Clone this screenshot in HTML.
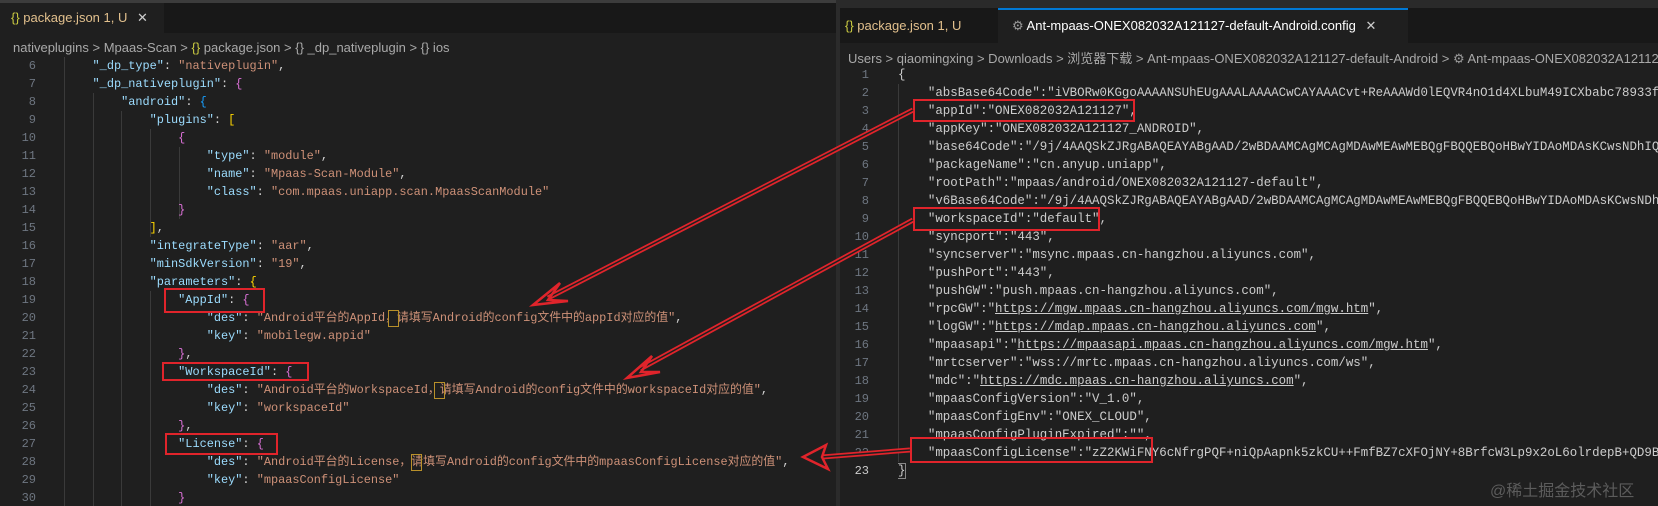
<!DOCTYPE html>
<html><head><meta charset="utf-8"><style>
*{margin:0;padding:0;box-sizing:border-box}
html,body{width:1658px;height:506px;overflow:hidden}
body{background:#1f1f1f;position:relative;font-family:"Liberation Sans","Noto Sans CJK SC",sans-serif}
.abs{position:absolute}
.code{position:absolute;white-space:pre;font-family:"Liberation Mono","Noto Sans CJK SC",monospace;line-height:18px}
.l{font-size:11.9px;color:#d4d4d4}
.r{font-size:12.45px;color:#cccccc}
.k{color:#9cdcfe}.s{color:#ce9178}.m{color:#da70d6}.b{color:#179fff}.y{color:#ffd700}
.ln{position:absolute;font-family:"Liberation Mono",monospace;font-size:12px;color:#6e7681;text-align:right;line-height:18px;white-space:pre}
.u{text-decoration:underline}
.bc{position:absolute;font-size:13px;color:#a9a9a9;white-space:nowrap;overflow:hidden}
.box{position:absolute;border:2px solid #e0242b}
.hl{position:absolute;border:1px solid #b8902a}
.guide{position:absolute;width:1px;background:#3a3a3a}
</style></head><body>
<div class="abs" style="left:0;top:0;width:836px;height:3px;background:#3c3c3c"></div>
<div class="abs" style="left:0;top:3px;width:836px;height:30px;background:#181818"></div>
<div class="abs" style="left:0;top:3px;width:164px;height:30px;background:#1f1f1f"></div>
<div class="abs" style="left:11px;top:10px;font-size:13px;color:#e2c08d;white-space:nowrap"><span style="color:#cbcb41">{}</span> package.json 1, U <span style="color:#ccc;margin-left:6px">✕</span></div>
<div class="bc" style="left:13px;top:40px;width:800px">nativeplugins &gt; Mpaas-Scan &gt; <span style="color:#cbcb41">{}</span> package.json &gt; {} _dp_nativeplugin &gt; {} ios</div>
<div class="guide" style="left:64px;top:57px;height:449px"></div>
<div class="guide" style="left:93px;top:93px;height:413px"></div>
<div class="guide" style="left:121px;top:111px;height:395px"></div>
<div class="guide" style="left:150px;top:129px;height:108px"></div>
<div class="guide" style="left:150px;top:291px;height:215px"></div>
<div class="guide" style="left:179px;top:147px;height:72px"></div>
<div class="ln" style="left:0;top:57px;width:36px">6
7
8
9
10
11
12
13
14
15
16
17
18
19
20
21
22
23
24
25
26
27
28
29
30</div>
<div class="code l" style="left:64px;top:57px;width:772px;height:449px;overflow:hidden">    <span class="k">"_dp_type"</span>: <span class="s">"nativeplugin"</span>,
    <span class="k">"_dp_nativeplugin"</span>: <span class="m">{</span>
        <span class="k">"android"</span>: <span class="b">{</span>
            <span class="k">"plugins"</span>: <span class="y">[</span>
                <span class="m">{</span>
                    <span class="k">"type"</span>: <span class="s">"module"</span>,
                    <span class="k">"name"</span>: <span class="s">"Mpaas-Scan-Module"</span>,
                    <span class="k">"class"</span>: <span class="s">"com.mpaas.uniapp.scan.MpaasScanModule"</span>
                <span class="m">}</span>
            <span class="y">]</span>,
            <span class="k">"integrateType"</span>: <span class="s">"aar"</span>,
            <span class="k">"minSdkVersion"</span>: <span class="s">"19"</span>,
            <span class="k">"parameters"</span>: <span class="y">{</span>
                <span class="k">"AppId"</span>: <span class="m">{</span>
                    <span class="k">"des"</span>: <span class="s">"Android平台的AppId，请填写Android的config文件中的appId对应的值"</span>,
                    <span class="k">"key"</span>: <span class="s">"mobilegw.appid"</span>
                <span class="m">}</span>,
                <span class="k">"WorkspaceId"</span>: <span class="m">{</span>
                    <span class="k">"des"</span>: <span class="s">"Android平台的WorkspaceId，请填写Android的config文件中的workspaceId对应的值"</span>,
                    <span class="k">"key"</span>: <span class="s">"workspaceId"</span>
                <span class="m">}</span>,
                <span class="k">"License"</span>: <span class="m">{</span>
                    <span class="k">"des"</span>: <span class="s">"Android平台的License，请填写Android的config文件中的mpaasConfigLicense对应的值"</span>,
                    <span class="k">"key"</span>: <span class="s">"mpaasConfigLicense"</span>
                <span class="m">}</span></div>
<div class="box" style="left:164px;top:288px;width:101px;height:25px"></div>
<div class="box" style="left:162px;top:362px;width:147px;height:19px"></div>
<div class="box" style="left:165px;top:433px;width:113px;height:22px"></div>
<div class="hl" style="left:388px;top:310px;width:11px;height:17px"></div>
<div class="hl" style="left:434px;top:382px;width:11px;height:17px"></div>
<div class="hl" style="left:411px;top:454px;width:11px;height:17px"></div>
<div class="abs" style="left:836px;top:0;width:4px;height:506px;background:#2b2b2b"></div>
<div class="abs" style="left:840px;top:0;width:818px;height:8px;background:#2a2a2a"></div>
<div class="abs" style="left:840px;top:8px;width:818px;height:35px;background:#181818"></div>
<div class="abs" style="left:998px;top:8px;width:410px;height:35px;background:#1f1f1f;border-top:2px solid #0078d4"></div>
<div class="abs" style="left:845px;top:18px;font-size:13px;color:#e2c08d;white-space:nowrap"><span style="color:#cbcb41">{}</span> package.json 1, U</div>
<div class="abs" style="left:1012px;top:18px;font-size:13px;color:#fff;white-space:nowrap"><span style="color:#9a9a9a">⚙</span> Ant-mpaas-ONEX082032A121127-default-Android.config <span style="color:#ccc;margin-left:6px">✕</span></div>
<div class="bc" style="left:848px;top:48px;width:810px">Users &gt; qiaomingxing &gt; Downloads &gt; 浏览器下载 &gt; Ant-mpaas-ONEX082032A121127-default-Android &gt; <span style="color:#9a9a9a">⚙</span> Ant-mpaas-ONEX082032A121127-default-Android.config</div>
<div class="guide" style="left:898px;top:84px;height:378px"></div>
<div class="ln" style="left:840px;top:66px;width:29px">1
2
3
4
5
6
7
8
9
10
11
12
13
14
15
16
17
18
19
20
21
22
<span style="color:#ccc">23</span></div>
<div class="code r" style="left:898px;top:66px;width:760px;height:440px;overflow:hidden">{
    "absBase64Code":"iVBORw0KGgoAAAANSUhEUgAAALAAAACwCAYAAACvt+ReAAAWd0lEQVR4nO1d4XLbuM49ICXbabc78933f717F",
    "appId":"ONEX082032A121127",
    "appKey":"ONEX082032A121127_ANDROID",
    "base64Code":"/9j/4AAQSkZJRgABAQEAYABgAAD/2wBDAAMCAgMCAgMDAwMEAwMEBQgFBQQEBQoHBwYIDAoMDAsKCwsNDhIQDQ4R",
    "packageName":"cn.anyup.uniapp",
    "rootPath":"mpaas/android/ONEX082032A121127-default",
    "v6Base64Code":"/9j/4AAQSkZJRgABAQEAYABgAAD/2wBDAAMCAgMCAgMDAwMEAwMEBQgFBQQEBQoHBwYIDAoMDAsKCwsNDhIQDQ4R",
    "workspaceId":"default",
    "syncport":"443",
    "syncserver":"msync.mpaas.cn-hangzhou.aliyuncs.com",
    "pushPort":"443",
    "pushGW":"push.mpaas.cn-hangzhou.aliyuncs.com",
    "rpcGW":"<span class="u">https://mgw.mpaas.cn-hangzhou.aliyuncs.com/mgw.htm</span>",
    "logGW":"<span class="u">https://mdap.mpaas.cn-hangzhou.aliyuncs.com</span>",
    "mpaasapi":"<span class="u">https://mpaasapi.mpaas.cn-hangzhou.aliyuncs.com/mgw.htm</span>",
    "mrtcserver":"wss://mrtc.mpaas.cn-hangzhou.aliyuncs.com/ws",
    "mdc":"<span class="u">https://mdc.mpaas.cn-hangzhou.aliyuncs.com</span>",
    "mpaasConfigVersion":"V_1.0",
    "mpaasConfigEnv":"ONEX_CLOUD",
    "mpaasConfigPluginExpired":"",
    "mpaasConfigLicense":"zZ2KWiFNY6cNfrgPQF+niQpAapnk5zkCU++FmfBZ7cXFOjNY+8BrfcW3Lp9x2oL6olrdepB+QD9BNMJ",
<span style="outline:1px solid #888">}</span></div>
<div class="box" style="left:913px;top:99px;width:222px;height:23px"></div>
<div class="box" style="left:913px;top:207px;width:187px;height:24px"></div>
<div class="box" style="left:910px;top:437px;width:243px;height:26px"></div>
<div class="abs" style="left:1490px;top:477px;font-size:16px;color:#5c5c5c;white-space:nowrap">@稀土掘金技术社区</div>
<svg class="abs" style="left:0;top:0" width="1658" height="506">
<g fill="none" stroke="#e0242b" stroke-linejoin="miter">
<line x1="913" y1="110" x2="548" y2="298" stroke-width="5"/>
<line x1="913" y1="110" x2="548" y2="298" stroke="#1f1f1f" stroke-width="1.5"/>
<polygon points="533,305 560,283 548,300 568,301" stroke-width="2.5"/>
<line x1="913" y1="220" x2="640" y2="369" stroke-width="5"/>
<line x1="913" y1="220" x2="640" y2="369" stroke="#1f1f1f" stroke-width="1.5"/>
<polygon points="627,378 652,356 641,372 660,372" stroke-width="2.5"/>
<line x1="910" y1="450" x2="822" y2="457" stroke-width="5"/>
<line x1="910" y1="450" x2="822" y2="457" stroke="#1f1f1f" stroke-width="1.5"/>
<polygon points="803,457 826,445 822,457 828,469" stroke-width="2.5"/>
</g>
</svg>
</body></html>
